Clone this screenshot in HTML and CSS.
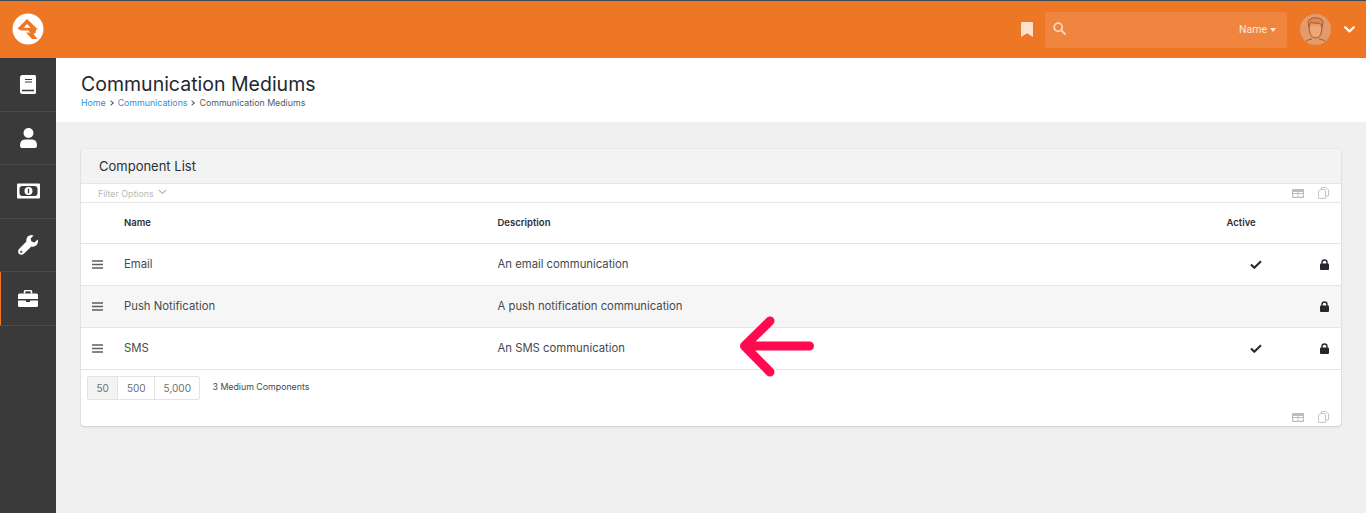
FILE: index.html
```html
<!DOCTYPE html>
<html lang="en">
<head>
<meta charset="utf-8">
<title>Communication Mediums</title>
<link rel="stylesheet" href="styles.css">
</head>
<body>
<header class="topbar">
  <svg class="logo" viewBox="0 0 32 32" width="32" height="32">
    <circle cx="16" cy="16" r="15.5" fill="#fff"/>
    <path d="M5.5 15.5 L15 6 L26 16.5 L20.5 16.5 L15 11 L11.5 14.8 L21 14.8 Q24 15 24 18 Q24 20.5 21.5 21 L25.5 26 L20 26 L14 19.5 L18.5 19.5 L16 17.5 L9 17.5 Z" fill="#ee7725"/>
  </svg>
  <div class="top-right">
    <svg class="bookmark" viewBox="0 0 12 15" width="12" height="15"><path d="M0 1.2Q0 0 1.2 0H10.8Q12 0 12 1.2V15L6 11.2 0 15Z" fill="#fde3cf"/></svg>
    <div class="search">
      <svg viewBox="0 0 13 13" width="13" height="13" fill="none" stroke="#fbd6bc" stroke-width="1.8"><circle cx="5.2" cy="5.2" r="4"/><path d="M8.2 8.2L12 12" stroke-linecap="round"/></svg>
      <span class="search-name">Name</span>
      <span class="caret"></span>
    </div>
    <div class="avatar">
      <svg viewBox="0 0 31 31" width="31" height="31" fill="none" stroke="#a9572a" stroke-width="1">
        <path d="M9 12 Q9 24 15.5 24 Q22 24 22 12" fill="#eea878"/>
        <path d="M9 13 Q7 6 10 6 Q11 3 17 4 Q23 4 23 9 L22 13 Q21 9 19 9 Q14 10 11 8 Q10 10 9 13Z" fill="#d98a57"/>
        <path d="M4 30 Q5 26 12 25 M27 30 Q26 26 19 25"/>
      </svg>
    </div>
    <svg class="chev" viewBox="0 0 11 7" width="11" height="7" fill="none" stroke="#fff" stroke-width="2.2" stroke-linecap="round" stroke-linejoin="round"><path d="M1.2 1.2L5.5 5.4 9.8 1.2"/></svg>
  </div>
</header>
<div class="shell">
  <nav class="side">
    <div class="side-item">
      <svg viewBox="0 0 16 19" width="16" height="19"><path d="M2.5 0H14.5Q16 0 16 1.5V17.5Q16 19 14.5 19H2.5Q0 19 0 16.5V2.5Q0 0 2.5 0Z" fill="#fff"/><path d="M5 4.5H12M5 7H12" stroke="#3b3b3b" stroke-width="1.2"/><path d="M2 15.5H14" stroke="#3b3b3b" stroke-width="1.6"/></svg>
    </div>
    <div class="side-item">
      <svg viewBox="0 0 17 20" width="17" height="20" fill="#fff"><circle cx="8.5" cy="5" r="5"/><path d="M0 17.5Q0 11.5 5 11.5H12Q17 11.5 17 17.5Q17 20 15 20H2Q0 20 0 17.5Z"/></svg>
    </div>
    <div class="side-item">
      <svg viewBox="0 0 23 16" width="23" height="16"><rect width="23" height="15" y=".5" rx="1" fill="#fff"/><rect x="2.5" y="3" width="18" height="10" rx="3" fill="#3b3b3b"/><circle cx="11.5" cy="8" r="4" fill="#fff"/><path d="M11.5 5.8V10.2" stroke="#3b3b3b" stroke-width="1.3"/></svg>
    </div>
    <div class="side-item">
      <svg viewBox="0 0 20 20" width="20" height="20"><path d="M19.6 4.4L16.5 7.4 13.4 6.6 12.6 3.5 15.6.4Q12.2-.8 9.8 1.6 7.8 3.6 8.4 6.4L.8 14.2Q-.6 16 .8 18.8 3.4 20.6 5.6 19L13.4 11.4Q16.4 12.2 18.4 10.2 20.8 7.8 19.6 4.4Z" fill="#fff"/><circle cx="3.2" cy="16.8" r="1.1" fill="#3b3b3b"/></svg>
    </div>
    <div class="side-item side-active">
      <svg viewBox="0 0 20 17" width="20" height="17"><path d="M6.5 3.5V2Q6.5.5 8 .5H12Q13.5.5 13.5 2V3.5" fill="none" stroke="#fff" stroke-width="1.6"/><path d="M0 5Q0 3.5 1.5 3.5H18.5Q20 3.5 20 5V9H0ZM0 10.5H8V12H12V10.5H20V15.5Q20 17 18.500 17H1.500Q0 17 0 15.500Z" fill="#fff"/></svg>
    </div>
  </nav>
  <main class="content">
    <section class="page-head">
      <h1>Communication Mediums</h1>
      <ol class="crumbs">
        <li><a>Home</a></li>
        <li class="sep"></li>
        <li><a>Communications</a></li>
        <li class="sep"></li>
        <li>Communication Mediums</li>
      </ol>
    </section>
    <section class="panel">
      <div class="panel-head">Component List</div>
      <div class="filter">
        <span class="filter-label">Filter Options</span>
        <svg class="filter-chev" viewBox="0 0 9 6" width="9" height="6" fill="none" stroke="#b5b5b5" stroke-width="1.2"><path d="M.8 .8L4.500 4.500 8.200 .8"/></svg>
        <span class="tools">
          <svg viewBox="0 0 12 9" width="12" height="9"><use href="#grid-ico"/></svg>
          <svg viewBox="0 0 11 12" width="11" height="12"><use href="#copy-ico"/></svg>
        </span>
      </div>
      <div class="row row-head">
        <span class="c-grip"></span><span class="c-name">Name</span><span class="c-desc">Description</span><span class="c-active">Active</span><span class="c-lock"></span>
      </div>
      <div class="row">
        <span class="c-grip"><svg viewBox="0 0 11 9" width="11" height="9"><use href="#bars-ico"/></svg></span>
        <span class="c-name">Email</span><span class="c-desc">An email communication</span>
        <span class="c-active"><svg class="check" viewBox="0 0 12 9" width="12" height="9"><use href="#check-ico"/></svg></span>
        <span class="c-lock"><svg viewBox="0 0 9 11" width="9" height="11"><use href="#lock-ico"/></svg></span>
      </div>
      <div class="row row-alt">
        <span class="c-grip"><svg viewBox="0 0 11 9" width="11" height="9"><use href="#bars-ico"/></svg></span>
        <span class="c-name">Push Notification</span><span class="c-desc">A push notification communication</span>
        <span class="c-active"></span>
        <span class="c-lock"><svg viewBox="0 0 9 11" width="9" height="11"><use href="#lock-ico"/></svg></span>
      </div>
      <div class="row">
        <span class="c-grip"><svg viewBox="0 0 11 9" width="11" height="9"><use href="#bars-ico"/></svg></span>
        <span class="c-name">SMS</span><span class="c-desc">An SMS communication</span>
        <span class="c-active"><svg class="check" viewBox="0 0 12 9" width="12" height="9"><use href="#check-ico"/></svg></span>
        <span class="c-lock"><svg viewBox="0 0 9 11" width="9" height="11"><use href="#lock-ico"/></svg></span>
      </div>
      <div class="pager">
        <div class="pages"><span class="page page-on">50</span><span class="page">500</span><span class="page">5,000</span></div>
        <span class="count">3 Medium Components</span>
      </div>
      <div class="panel-foot">
        <span class="tools">
          <svg viewBox="0 0 12 9" width="12" height="9"><use href="#grid-ico"/></svg>
          <svg viewBox="0 0 11 12" width="11" height="12"><use href="#copy-ico"/></svg>
        </span>
      </div>
    </section>
  </main>
</div>
<svg class="arrow" viewBox="0 0 76 64" width="76" height="64" fill="none" stroke="#ff0a50" stroke-width="9" stroke-linecap="round" stroke-linejoin="round"><path d="M70.500 31H6M31 6L5.500 31 31 57"/></svg>
<svg class="defs" width="0" height="0">
  <defs>
    <g id="grid-ico"><path d="M1 0H11Q12 0 12 1V8Q12 9 11 9H1Q0 9 0 8V1Q0 0 1 0ZM1.200 3V4H5.500V3ZM6.500 3V4H10.800V3ZM1.200 5V7.800H5.500V5ZM6.500 5V7.800H10.800V5Z" fill="#bdbdbd" fill-rule="evenodd"/></g>
    <g id="copy-ico" fill="none" stroke="#c4c4c4"><path d="M7.500 3.500V11Q7.500 11.500 7 11.500H1Q.5 11.500 .5 11V4L3 2.500H7Q7.500 2.500 7.500 3.500Z"/><path d="M3.500 2.500V1Q3.500 .5 4 .5H8L10.500 3V8.500Q10.500 9 10 9H7.500"/></g>
    <g id="bars-ico"><path d="M0 1H11M0 4.500H11M0 8H11" stroke="#5a6068" stroke-width="1.500"/></g>
    <g id="check-ico"><path d="M1 4.500L4.300 7.700 11 1.200" fill="none" stroke="#23282e" stroke-width="2.100"/></g>
    <g id="lock-ico"><path d="M2 5V3.300Q2 1 4.500 1 7 1 7 3.300V5" fill="none" stroke="#23282e" stroke-width="1.400"/><rect y="4.500" width="9" height="6.500" rx="1" fill="#23282e"/></g>
  </defs>
</svg>
</body>
</html>
```
FILE: styles.css
```css
* { box-sizing: border-box; }
html, body { margin: 0; height: 513px; overflow: hidden; }
body { font-family: Inter, "Liberation Sans", sans-serif; color: #2b3036; background: #f0f0f0; position: relative; }

.topbar { height: 58px; background: #ee7725; border-top: 1px solid #3d4a57; display: flex; align-items: center; justify-content: space-between; padding: 0 11px 0 12px; }
.logo { display: block; margin-top: -1px; }
.top-right { display: flex; align-items: center; }
.bookmark { display: block; margin-right: 12px; }
.search { width: 242px; height: 36px; background: #f0853f; border-radius: 3px; display: flex; align-items: center; padding: 0 11px 0 8px; margin-right: 13px; }
.search svg { display: block; margin-top: -2px; }
.search-name { margin-left: auto; font-family: Roboto, sans-serif; font-size: 10.500px; color: #fde8d8; }
.caret { margin-left: 3px; border: 3.500px solid transparent; border-top: 4px solid #fde8d8; border-bottom: 0; }
.avatar { width: 31px; height: 31px; border-radius: 50%; background: #e29b6c; overflow: hidden; margin-right: 13px; }
.avatar svg { display: block; }
.chev { display: block; }

.shell { display: flex; height: 455px; }
.side { width: 56px; flex: none; background: #3a3a3a; }
.side-item { height: 53.500px; border-bottom: 1px solid #4a4a4a; display: flex; align-items: center; justify-content: center; }
.side-item svg { display: block; }
.side-active { border-left: 1px solid #ee7725; padding-right: 1px; }

.content { flex: 1; min-width: 0; background: #f0f0f0; }
.page-head { height: 64px; background: #fff; padding: 14px 25px 0; }
h1 { margin: 0; font-size: 19.500px; line-height: 24px; font-weight: 400; color: #23282e; }
.crumbs { list-style: none; margin: 1px 0 0; padding: 0; display: flex; align-items: center; font-size: 8.800px; line-height: 11px; color: #555b62; }
.crumbs a { color: #2f8fe0; }
.sep { width: 4px; height: 4px; border-top: 1px solid #555b62; border-right: 1px solid #555b62; transform: rotate(45deg); margin: 0 5px 0 3px; }

.panel { margin: 27px 25px 0; height: 277px; background: #fff; border-radius: 3px; box-shadow: 0 0 1px rgba(0,0,0,.3), 0 1px 2px rgba(0,0,0,.12); }
.panel-head { height: 35px; background: #f3f3f3; border-bottom: 1px solid #e6e6e6; border-radius: 3px 3px 0 0; padding: 0 18px 1px; display: flex; align-items: center; font-size: 13px; color: #2b3036; }
.filter { height: 19px; border-bottom: 1px solid #e8e8e8; display: flex; align-items: center; padding: 0 12px 0 17px; }
.filter-label { font-size: 8.800px; color: #b8b8b8; }
.filter-chev { margin-left: 4px; margin-top: -2px; }
.tools { margin-left: auto; display: flex; align-items: center; gap: 14px; }
.tools svg { display: block; }

.row { height: 42px; border-bottom: 1px solid #e6e6e6; display: flex; align-items: center; font-size: 11.300px; color: #444a50; padding-bottom: 1px; }
.row-head { height: 41px; font-size: 9.500px; font-weight: 600; color: #2b3036; }
.row-alt { background: #f6f6f6; }
.c-grip { width: 43px; padding-left: 11px; flex: none; }
.c-grip svg { display: block; }
.c-name { width: 373.500px; flex: none; }
.c-desc { width: 729px; flex: none; }
.c-active { width: 60px; flex: none; }
.c-active .check { display: block; margin-left: 23px; }
.row-head .c-active { padding-left: 0; }
.c-lock { flex: 1; display: flex; justify-content: flex-end; padding-right: 12px; }
.c-lock svg { display: block; }

.pager { display: flex; align-items: flex-start; padding: 6px 6px 0; height: 41px; }
.pages { display: flex; height: 24px; border: 1px solid #e3e3e3; border-radius: 2px; font-size: 10px; color: #6b6f74; }
.page { display: flex; align-items: center; justify-content: center; padding: 0 8.500px; border-left: 1px solid #e3e3e3; }
.page:first-child { border-left: 0; }
.page-on { background: #f3f3f3; }
.count { margin: 5px 0 0 12px; font-size: 8.800px; line-height: 11px; color: #444a50; }
.panel-foot { display: flex; padding: 0 12px; }

.arrow { position: absolute; left: 739px; top: 315px; display: block; }
.defs { position: absolute; }
```
